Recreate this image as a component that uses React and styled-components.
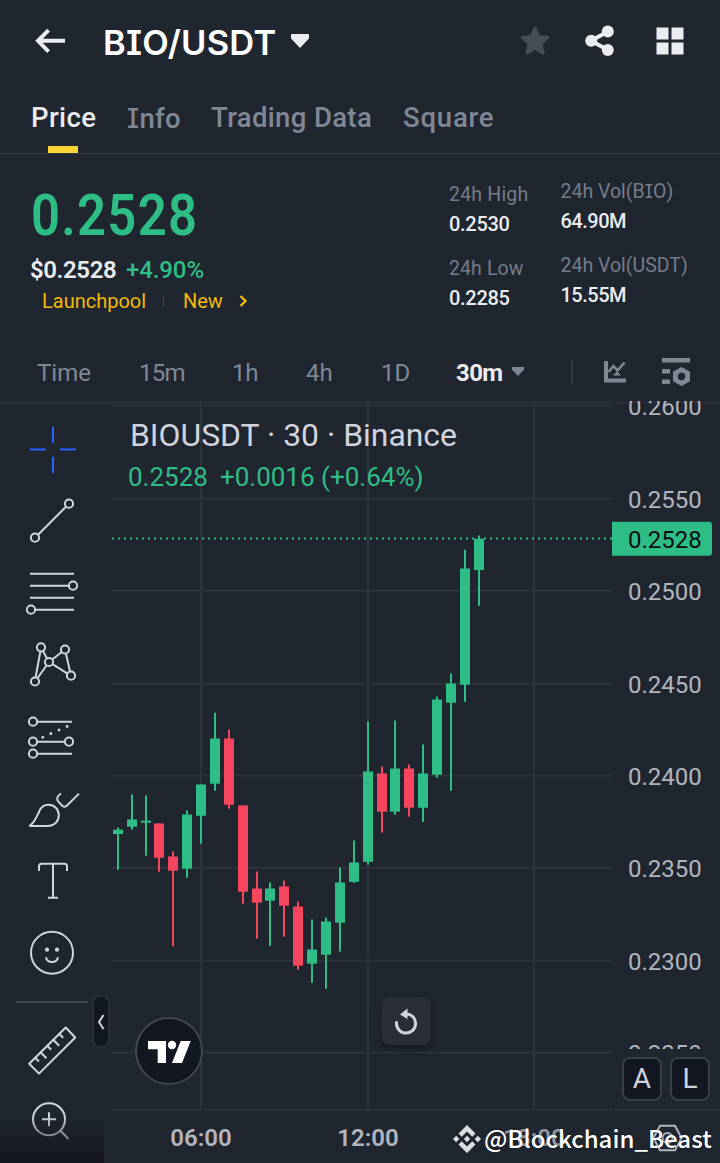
import React from 'react';
import styled, { createGlobalStyle } from 'styled-components';

const COLORS = {
  BG: '#202630',
  TEXT: '#eaecef',
  MUTED: '#808896',
  GREEN: '#2ebd85',
  RED: '#f6465d',
  YELLOW: '#f0b90b',
  ICON: '#d1d4dc',
  AXIS: '#b2b5be',
  GRID: '#2d323c',
  DARK: '#131722',
  LINE: '#434651',
};

const GlobalStyle = createGlobalStyle`
  * { box-sizing: border-box; }
  body {
    margin: 0;
    background: ${COLORS.BG};
    font-family: Roboto, "Liberation Sans", sans-serif;
  }
  svg { display: block; }
`;

const Screen = styled.div`
  display: flex;
  flex-direction: column;
  width: 720px;
  height: 1163px;
  overflow: hidden;
  background: ${COLORS.BG};
  color: ${COLORS.TEXT};
`;

const Header = styled.header`
  display: grid;
  grid-template-columns: 68px 187px 229px 66px 71px 28px;
  align-items: center;
  height: 84px;
  padding: 0 0 2px 35px;
`;

const PairName = styled.h1`
  margin: 3px 0 0;
  font-family: Inter, sans-serif;
  font-feature-settings: "cv08";
  font-size: 34.5px;
  line-height: 40px;
  font-weight: 600;
  letter-spacing: 0.25px;
  color: #fff;
  white-space: nowrap;
`;

const Tabs = styled.nav`
  display: grid;
  grid-template-columns: 96px 84px 192px 120px;
  height: 70px;
  padding: 20px 0 0 31px;
  border-bottom: 1px solid #333943;
`;

const Tab = styled.div`
  position: relative;
  font-size: 27.5px;
  line-height: 28px;
  font-weight: 500;
  letter-spacing: ${({ $spacing }) => $spacing || 0}px;
  color: ${({ $active }) => ($active ? COLORS.TEXT : COLORS.MUTED)};
  white-space: nowrap;

  &::after {
    content: "";
    display: ${({ $active }) => ($active ? 'block' : 'none')};
    position: absolute;
    left: 17px;
    top: 42px;
    width: 30px;
    height: 7px;
    background: #fcd535;
  }
`;

const SerifI = styled.span`
  font-family: Inter, sans-serif;
  font-feature-settings: "cv08";
  font-size: 0.97em;
`;

const Summary = styled.section`
  display: grid;
  grid-template-columns: 418px 111.5px 150px;
  height: 187px;
  padding: 27px 0 0 31px;
`;

const PriceBlock = styled.div`
  display: flex;
  flex-direction: column;
`;

const LastPrice = styled.div`
  height: 70px;
  font-size: 56.5px;
  line-height: 70px;
  font-weight: 600;
  letter-spacing: 1.4px;
  transform: scaleX(0.9);
  transform-origin: left;
  color: ${COLORS.GREEN};
`;

const PriceLine = styled.div`
  display: grid;
  grid-template-columns: 95px 100px;
  height: 36px;
  margin-left: -1px;
  font-size: 24px;
  line-height: 39px;
  font-weight: 500;
`;

const Fiat = styled.span`
  font-weight: 600;
  letter-spacing: -0.4px;
`;

const Change = styled.span`
  padding-left: 1px;
  letter-spacing: -0.1px;
  color: ${COLORS.GREEN};
`;

const TagLine = styled.div`
  display: grid;
  grid-template-columns: 121px 20px 56px 10px;
  align-items: center;
  height: 28px;
  padding-left: 11px;
  font-size: 20px;
  line-height: 28px;
  letter-spacing: 0;
  color: ${COLORS.YELLOW};
`;

const TagDivider = styled.span`
  width: 1px;
  height: 9px;
  background: #444a55;
`;

const StatColumn = styled.div`
  display: flex;
  flex-direction: column;
  gap: 18px;
  margin-top: ${({ $offset }) => $offset}px;
`;

const Stat = styled.div`
  height: 56px;
`;

const StatLabel = styled.div`
  font-size: 19.5px;
  line-height: 26px;
  letter-spacing: ${({ $spacing }) => $spacing}px;
  color: #757c89;
  white-space: nowrap;
`;

const StatValue = styled.div`
  margin-top: 3px;
  font-size: 20px;
  line-height: 27px;
  font-weight: 500;
  letter-spacing: ${({ $spacing }) => $spacing}px;
`;

const IntervalBar = styled.div`
  display: grid;
  grid-template-columns: 102px 93px 74px 75px 75px 55px 60px 33px 58px 30px;
  align-items: center;
  height: 60px;
  padding: 1px 0 0 37px;
`;

const Interval = styled.span`
  font-size: 24px;
  line-height: 30px;
  padding-top: 3px;
  letter-spacing: ${({ $spacing }) => $spacing || 0}px;
  font-weight: ${({ $active }) => ($active ? 700 : 400)};
  color: ${({ $active }) => ($active ? COLORS.TEXT : COLORS.MUTED)};
`;

const BarDivider = styled.span`
  width: 2px;
  height: 24px;
  background: #343a44;
`;

const ChartArea = styled.main`
  position: relative;
  display: grid;
  grid-template-columns: 112px 608px;
  height: 762px;
`;

const TopEdge = styled.div`
  position: absolute;
  top: 0;
  left: 0;
  width: 720px;
  height: 3px;
  background: rgba(255, 255, 255, 0.025);
`;

const Toolbar = styled.aside`
  position: relative;
  display: flex;
  flex-direction: column;
  padding: 13px 0 0 16px;
  overflow: hidden;
`;

const Tool = styled.svg`
  flex: none;
  width: 72px;
  height: 72px;
  fill: none;
  stroke: ${({ $color }) => $color || COLORS.ICON};
  stroke-width: 2;
`;

const ToolSeparator = styled.div`
  flex: none;
  width: 72px;
  height: 2px;
  margin: 11px 0;
  background: ${COLORS.LINE};
`;

const ToolbarFade = styled.div`
  position: absolute;
  left: 0;
  bottom: 0;
  width: 104px;
  height: 48px;
  background: linear-gradient(rgba(19, 23, 34, 0), rgba(19, 21, 31, 0.95));
`;

const CollapseHandle = styled.div`
  position: absolute;
  left: 92px;
  top: 594px;
  display: flex;
  align-items: center;
  justify-content: center;
  width: 18px;
  height: 53px;
  border: 2px solid #2a2e39;
  border-radius: 8px;
  background: ${COLORS.DARK};
`;

const ChartPane = styled.div`
  position: relative;
`;

const Legend = styled.div`
  position: absolute;
  left: 18px;
  top: 14px;
`;

const LegendTitle = styled.div`
  font-size: 31.9px;
  line-height: 40px;
  color: ${COLORS.ICON};
  white-space: pre;
`;

const LegendValues = styled.div`
  display: flex;
  gap: 12px;
  margin: 4px 0 0 -2px;
  font-size: 26px;
  line-height: 36px;
  color: ${COLORS.GREEN};
  white-space: nowrap;
`;

const TradingViewBadge = styled.div`
  position: absolute;
  left: 23px;
  top: 616px;
  width: 68px;
  height: 68px;
  border: 2px solid ${COLORS.LINE};
  border-radius: 50%;
  background: ${COLORS.DARK};
`;

const ResetButton = styled.div`
  position: absolute;
  left: 270px;
  top: 596px;
  width: 48px;
  height: 48px;
  border-radius: 7px;
  background: #2a2e39;
  box-shadow: 0 4px 8px rgba(0, 0, 0, 0.3);
`;

const ScaleButtons = styled.div`
  position: absolute;
  left: 510px;
  top: 656px;
  display: flex;
  gap: 8px;
`;

const ScaleButton = styled.div`
  width: 40px;
  height: 44px;
  border: 2px solid #3a3e49;
  border-radius: 8px;
  background: ${COLORS.DARK};
  font-size: 28px;
  line-height: 39px;
  text-align: center;
  color: ${COLORS.ICON};
`;

const Watermark = styled.div`
  position: absolute;
  left: 453px;
  top: 720px;
  display: flex;
  align-items: center;
  gap: 3px;
  height: 36px;
  font-family: "Noto Sans CJK SC", sans-serif;
  font-size: 24px;
  line-height: 34px;
  font-weight: 500;
  color: #fff;
  text-shadow: 0 0 2px rgba(0, 0, 0, 0.5);
  white-space: nowrap;
`;

const WatermarkName = styled.span`
  height: 36px;
  letter-spacing: 0.05px;
`;

// x centre, high, body top, body bottom, low
const CANDLES = [
  [118, 827.5, 829.7, 834, 869.7, 'up'],
  [132, 794.5, 819.5, 826.7, 829.7, 'up'],
  [146, 795.5, 820.7, 822.7, 855.7, 'up'],
  [159, 823.5, 823.5, 857.7, 871.7, 'down'],
  [173, 851.5, 856.5, 870.7, 946, 'down'],
  [187, 810.5, 814.5, 868.7, 877.7, 'up'],
  [201, 784.5, 784.5, 815.7, 843.7, 'up'],
  [215, 712.7, 738.5, 783.7, 790.7, 'up'],
  [229, 729.5, 738.5, 804.7, 808.7, 'down'],
  [243, 805.5, 805.5, 891.7, 903.7, 'down'],
  [257, 871.5, 888.5, 902.7, 938.7, 'down'],
  [270, 882.5, 888.5, 900.7, 946, 'up'],
  [284, 880.5, 886.5, 905.7, 936.7, 'down'],
  [298, 901.5, 906.5, 965.7, 969.7, 'down'],
  [312, 919.5, 949.5, 963.7, 982.7, 'up'],
  [326, 917.5, 921.5, 954.7, 988.7, 'up'],
  [340, 867.5, 882.5, 922.7, 951.7, 'up'],
  [354, 840.5, 862.5, 881.8, 882.8, 'up'],
  [368, 721.5, 771.5, 861.8, 864.7, 'up'],
  [382, 766.5, 773.5, 811.7, 832.7, 'down'],
  [395, 720.5, 768.5, 811.7, 814.7, 'up'],
  [409, 764.5, 768.5, 807.7, 816.7, 'down'],
  [423, 744.5, 773.5, 807.7, 822, 'up'],
  [437, 696.5, 699.5, 774.7, 777.7, 'up'],
  [451, 673.5, 683.5, 702.7, 790.7, 'up'],
  [465, 549.7, 568.5, 684.7, 701.7, 'up'],
  [479, 535.5, 538.7, 570, 605.7, 'up'],
];

const PRICE_LEVELS = [
  [405.7, '0.2600'],
  [498.7, '0.2550'],
  [590.7, '0.2500'],
  [683.7, '0.2450'],
  [775.7, '0.2400'],
  [867.7, '0.2350'],
  [960.7, '0.2300'],
  [1052.5, '0.2250'],
];

const TIME_LEVELS = [
  [201, '06:00'],
  [368, '12:00'],
  [534, '18:00'],
];

const TOOLS = [
  {
    name: 'cross',
    color: '#2962ff',
    draw: <path d="M14 35.5h16M44 35.5h16M37 12.7v16.3M37 42.7v16.3" />,
  },
  {
    name: 'trend',
    draw: (
      <>
        <circle cx="53" cy="17.7" r="4.1" />
        <circle cx="19" cy="51.7" r="4.1" />
        <path d="M22 48.7L50 20.7" />
      </>
    ),
  },
  {
    name: 'fib',
    draw: (
      <>
        <path d="M14 15.7h44M14 27.7h39M14 39.7h44M19 51.7h39" />
        <circle cx="57" cy="27.7" r="4.1" />
        <circle cx="15" cy="51.7" r="4.1" />
      </>
    ),
  },
  {
    name: 'pattern',
    draw: (
      <>
        <path d="M24.4 21.3L19.6 47.4M27 21L31 28.4M36.2 29.5L45.8 22M49.9 23.5L54.1 41.7M36.5 34.1L51.5 43.6M30.6 35.2L21.5 48.2" />
        <circle cx="25" cy="17.3" r="4.1" />
        <circle cx="49" cy="19.5" r="4.1" />
        <circle cx="33" cy="32" r="4.1" />
        <circle cx="55" cy="45.7" r="4.1" />
        <circle cx="19" cy="51.5" r="4.1" />
      </>
    ),
  },
  {
    name: 'forecast',
    draw: (
      <>
        <path d="M21 19.7h35M21 39.7h28M21 51.7h35" />
        <path d="M26.7 35.2L52 24" strokeWidth="2.8" strokeLinecap="round" strokeDasharray="0.1 8.8" />
        <circle cx="17" cy="19.7" r="4.1" />
        <circle cx="17" cy="39.7" r="4.1" />
        <circle cx="53" cy="39.7" r="4.1" />
        <circle cx="17" cy="51.7" r="4.1" />
      </>
    ),
  },
  {
    name: 'brush',
    draw: (
      <>
        <path strokeLinejoin="bevel" d="M13.5 52C19 48 21 42 23.300 37.200C25 33 28.500 30.700 32.500 30.700C38.300 30.700 42.800 35.300 42.800 41C42.800 47.400 38.300 52 32 52Z" />
        <path d="M45 19.5C41.5 21.5 40 25 42.3 27.6L46.3 31.7Q48.5 33.8 50.7 31.7L63 19.6" />
      </>
    ),
  },
  {
    name: 'text',
    draw: <path d="M23 25v-4.8q0-2.5 2.5-2.5h23q2.5 0 2.5 2.5v4.8M37 17.7v34M32 51.7h10" />,
  },
  {
    name: 'emoji',
    draw: (
      <>
        <circle cx="36" cy="34.7" r="21" />
        <path d="M30 39.2c.5 3 3 4.9 6 4.9s5.5-1.9 6-4.9" />
        <circle cx="31" cy="31.7" r="1.1" />
        <circle cx="41" cy="31.7" r="1.1" />
      </>
    ),
  },
];

const BackIcon = () => (
  <svg width="30" height="24" viewBox="0 0 30 24" fill="none" stroke={COLORS.TEXT} strokeWidth="4">
    <path d="M30 11.8H4M13.6 1.2L3 11.8l10.6 10.8" />
  </svg>
);

const StarIcon = () => (
  <svg width="32" height="32" viewBox="0 0 32 32" fill="#474d57" stroke="#474d57" strokeWidth="3" strokeLinejoin="round">
    <path d="M16 3.2l3.700 8.400 9.300.9-7 6.200 2 9.300-8-4.800-8 4.800 2-9.300-7-6.200 9.300-.9z" />
  </svg>
);

const ShareIcon = () => (
  <svg width="30" height="32" viewBox="0 0 30 32" fill={COLORS.TEXT}>
    <circle cx="6.2" cy="15.8" r="6" />
    <circle cx="22.8" cy="6.6" r="6" />
    <circle cx="22.8" cy="25" r="6" />
    <path d="M22.8 6.6L6.2 15.8l16.6 9.2" fill="none" stroke={COLORS.TEXT} strokeWidth="4" />
  </svg>
);

const GridIcon = () => (
  <svg width="28" height="28" viewBox="0 0 28 28" fill={COLORS.TEXT}>
    <path d="M.5.5h12v12h-12zM15.5.5h12v12h-12zM.5 15.5h12v12h-12zM15.5 15.5h12v12h-12z" />
  </svg>
);

const PriceChart = () => (
  <svg width="608" height="762" viewBox="112 401 608 762">
    <clipPath id="axisClip">
      <rect x="612" y="401" width="108" height="648" />
    </clipPath>
    <g fill={COLORS.GRID}>
      {PRICE_LEVELS.map(([y, label]) => (
        <rect key={label} x="112" y={y - 1} width="500" height="2" />
      ))}
      {TIME_LEVELS.map(([x, label]) => (
        <rect key={label} x={x - 1} y="401" width="2" height="708" />
      ))}
      <rect x="112" y="1108.7" width="500" height="2" />
      <rect x="614" y="1108.7" width="106" height="2" />
    </g>
    <path d="M112 538.5H612" stroke={COLORS.GREEN} strokeWidth="2" strokeDasharray="2 4" />
    {CANDLES.map(([x, high, top, bottom, low, side]) => (
      <g key={x} fill={side === 'up' ? COLORS.GREEN : COLORS.RED}>
        <rect x={x - 1} y={high} width="2" height={low - high} />
        <rect x={x - 5} y={top} width="10" height={bottom - top} />
      </g>
    ))}
    <g clipPath="url(#axisClip)" fill={COLORS.AXIS} fontSize="24">
      {PRICE_LEVELS.map(([y, label]) => (
        <text key={label} x="628" y={y + 9}>{label}</text>
      ))}
    </g>
    <path d="M612 521.7h97q3 0 3 3v28q0 3-3 3h-97z" fill={COLORS.GREEN} />
    <text x="628" y="547.7" fontSize="24" fill="#0c0e15">0.2528</text>
    <g fill={COLORS.AXIS} fontSize="24" fontWeight="600" textAnchor="middle">
      {TIME_LEVELS.map(([x, label]) => (
        <text key={label} x={x} y="1145.7" opacity={label === '18:00' ? 0.8 : 1}>{label}</text>
      ))}
    </g>
    <g fill="none" stroke={COLORS.AXIS} strokeWidth="2">
      <path d="M660 1125.7h15l6.5 12.3-6.5 12.3h-15l-6.5-12.3z" />
      <circle cx="667.5" cy="1138" r="5" />
    </g>
  </svg>
);

export default function App() {
  return (
    <Screen>
      <GlobalStyle />
      <Header>
        <BackIcon />
        <PairName>BIO/USDT</PairName>
        <svg width="20" height="16" viewBox="0 0 20 16" fill={COLORS.TEXT}>
          <path d="M1 1h18v4.5l-9 9.5-9-9.5z" />
        </svg>
        <StarIcon />
        <ShareIcon />
        <GridIcon />
      </Header>
      <Tabs>
        <Tab $active $spacing={0.4}>Price</Tab>
        <Tab $spacing={0.3}><SerifI>I</SerifI>nfo</Tab>
        <Tab $spacing={0.35}>Trading Data</Tab>
        <Tab $spacing={0.8}>Square</Tab>
      </Tabs>
      <Summary>
        <PriceBlock>
          <LastPrice>0.2528</LastPrice>
          <PriceLine>
            <Fiat>$0.2528</Fiat>
            <Change>+4.90%</Change>
          </PriceLine>
          <TagLine>
            <span>Launchpool</span>
            <TagDivider />
            <span>New</span>
            <svg width="9" height="12" viewBox="0 0 9 12" fill="none" stroke={COLORS.YELLOW} strokeWidth="2.4">
              <path d="M1.5 1l5 5-5 5" />
            </svg>
          </TagLine>
        </PriceBlock>
        <StatColumn $offset={0.6}>
          <Stat>
            <StatLabel $spacing={0.2}>24h High</StatLabel>
            <StatValue $spacing={-0.3}>0.2530</StatValue>
          </Stat>
          <Stat>
            <StatLabel $spacing={0.1}>24h Low</StatLabel>
            <StatValue $spacing={-0.3}>0.2285</StatValue>
          </Stat>
        </StatColumn>
        <StatColumn $offset={-2.4}>
          <Stat>
            <StatLabel $spacing={0}>24h Vol(B<SerifI>I</SerifI>O)</StatLabel>
            <StatValue $spacing={-0.5}>64.90M</StatValue>
          </Stat>
          <Stat>
            <StatLabel $spacing={0}>24h Vol(USDT)</StatLabel>
            <StatValue $spacing={-0.5}>15.55M</StatValue>
          </Stat>
        </StatColumn>
      </Summary>
      <IntervalBar>
        <Interval>Time</Interval>
        <Interval $spacing={-0.7}>15m</Interval>
        <Interval $spacing={-0.3}>1h</Interval>
        <Interval>4h</Interval>
        <Interval>1D</Interval>
        <Interval $active $spacing={-0.6}>30m</Interval>
        <svg width="14" height="12" viewBox="0 0 14 12" fill={COLORS.MUTED}>
          <path d="M1 1h12v2.5l-6 6.5-6-6.5z" />
        </svg>
        <BarDivider />
        <svg width="22" height="24" viewBox="0 0 22 24" fill="none" stroke={COLORS.MUTED}>
          <path d="M2 1v19.5h20" strokeWidth="4" />
          <path d="M4.5 12l5-6 4 4.5 7-8" strokeWidth="2.6" />
          <path d="M13 11.5l4 4h-8z" fill={COLORS.MUTED} stroke="none" />
        </svg>
        <svg width="30" height="30" viewBox="1 0 30 30" fill={COLORS.MUTED}>
          <path d="M1 1h28v4.5h-28zM1 12h8v4.5h-8zM1 22.5h8v4.5h-8z" />
          <path fillRule="evenodd" d="M20.5 10l8.5 4.7v9.6l-8.5 4.7-8.5-4.7v-9.6zM20.5 15.8a3.700 3.700 0 100 7.400 3.700 3.700 0 000-7.400z" />
        </svg>
      </IntervalBar>
      <ChartArea>
        <Toolbar>
          {TOOLS.map(({ name, color, draw }) => (
            <Tool key={name} viewBox="0 0 72 72" $color={color}>{draw}</Tool>
          ))}
          <ToolSeparator />
          <Tool viewBox="0 0 72 72">
            <path strokeLinejoin="round" d="M49.7 13.5L59.2 23.5 23 59.6 13.2 49.7z" />
            <path d="M18.7 43.3l4.2 4.2M24 37.7l6.5 6.5M30.7 31.2l4.5 4.5M36.7 25.3l6.5 6.5M42.7 19.3l4.5 4.5" />
          </Tool>
          <Tool viewBox="0 0 72 72">
            <circle cx="33" cy="33.3" r="16" />
            <path d="M26 33.3h14M33 26.3v14M44.5 44.8l8 8.2" />
          </Tool>
          <ToolbarFade />
        </Toolbar>
        <ChartPane>
          <PriceChart />
          <Legend>
            <LegendTitle>BIOUSDT · 30 · Binance</LegendTitle>
            <LegendValues>
              <span>0.2528</span>
              <span>+0.0016 (+0.64%)</span>
            </LegendValues>
          </Legend>
          <TradingViewBadge>
            <svg width="64" height="64" viewBox="2 2 64 64" fill="#fff">
              <path d="M13 24h18v22h-8.3v-13.7h-9.7zM45.7 24h10l-8.7 22h-10z" />
              <circle cx="37" cy="28" r="4.2" />
            </svg>
          </TradingViewBadge>
          <ResetButton>
            <svg width="48" height="48" viewBox="0 0 48 48">
              <path d="M14.5 25.5a9.6 9.6 0 1 0 9.5-8.600" fill="none" stroke={COLORS.ICON} strokeWidth="3" strokeLinecap="round" />
              <path d="M25.5 11.500v10.500l-7.500-4.500z" fill={COLORS.ICON} />
            </svg>
          </ResetButton>
          <ScaleButtons>
            <ScaleButton>A</ScaleButton>
            <ScaleButton>L</ScaleButton>
          </ScaleButtons>
        </ChartPane>
        <TopEdge />
        <CollapseHandle>
          <svg width="8" height="16" viewBox="0 0 8 16" fill="none" stroke={COLORS.ICON} strokeWidth="2">
            <path d="M6.5 1L2 8l4.5 7" />
          </svg>
        </CollapseHandle>
        <Watermark>
          <svg width="28" height="28" viewBox="0 0 28 28" fill="#dcdde0">
            <path d="M14 0l8.5 8.5-3.2 3.2-5.3-5.3-5.3 5.3-3.2-3.2zM14 28l-8.5-8.5 3.2-3.2 5.3 5.3 5.3-5.3 3.2 3.2zM3.2 10.8l3.2 3.2-3.2 3.2-3.2-3.2zM24.8 10.8l3.2 3.2-3.2 3.2-3.2-3.2zM14 10.8l3.2 3.2-3.2 3.2-3.2-3.2z" />
          </svg>
          <WatermarkName>@Blockchain_Beast</WatermarkName>
        </Watermark>
      </ChartArea>
    </Screen>
  );
}
